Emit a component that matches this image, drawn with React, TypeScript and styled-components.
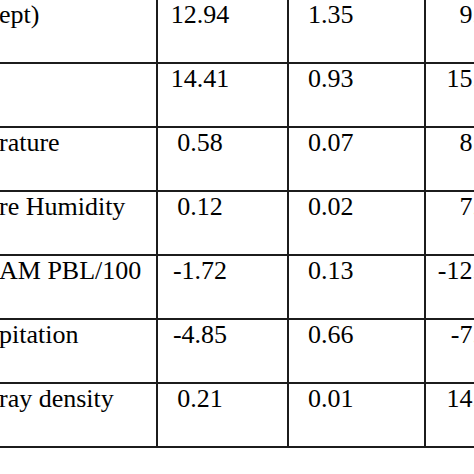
import { Fragment } from "react";
import styled, { createGlobalStyle } from "styled-components";

const GlobalStyle = createGlobalStyle`
  html, body {
    margin: 0;
    padding: 0;
    background: #ffffff;
    overflow: hidden;
  }
`;

const Page = styled.div`
  width: 474px;
  height: 474px;
  overflow: hidden;
  background: #ffffff;
`;

const Table = styled.div`
  display: grid;
  grid-template-columns: 158px 131px 137px 100px;
  grid-auto-rows: 64px;
  width: 526px;
  font-family: "Liberation Serif", "Times New Roman", serif;
  font-size: 26px;
  line-height: 30px;
  color: #000000;
`;

type CellProps = { $align: "left" | "center" | "right"; $last?: boolean };

const Cell = styled.div<CellProps>`
  box-sizing: border-box;
  border-bottom: 2px solid #1c1c1c;
  border-right: ${(p) => (p.$last ? "none" : "2px solid #1c1c1c")};
  text-align: ${(p) => p.$align};
  white-space: nowrap;
  overflow: hidden;
`;

const Label = styled(Cell)`
  padding-left: 0;
  margin-left: -1px;
`;

const Estimate = styled(Cell)`
  padding-right: 45px;
`;

const StdError = styled(Cell)`
  padding-left: 19px;
`;

const Stat = styled(Cell)`
  padding-right: 21px;
`;

const rows = [
  { label: "ept)", est: "12.94", se: "1.35", t: "9.59" },
  { label: "", est: "14.41", se: "0.93", t: "15.49" },
  { label: "rature", est: "0.58", se: "0.07", t: "8.29" },
  { label: "re Humidity", est: "0.12", se: "0.02", t: "7.51" },
  { label: "AM PBL/100", est: "-1.72", se: "0.13", t: "-12.63" },
  { label: "pitation", est: "-4.85", se: "0.66", t: "-7.35" },
  { label: "ray density", est: "0.21", se: "0.01", t: "14.92" },
];

function App() {
  return (
    <>
      <GlobalStyle />
      <Page>
        <Table>
          {rows.map((r, i) => (
            <Fragment key={i}>
              <Label $align="left">{r.label}</Label>
              <Estimate $align="center">{r.est}</Estimate>
              <StdError $align="left">{r.se}</StdError>
              <Stat $align="right" $last>
                {r.t}
              </Stat>
            </Fragment>
          ))}
        </Table>
      </Page>
    </>
  );
}

export default App;
